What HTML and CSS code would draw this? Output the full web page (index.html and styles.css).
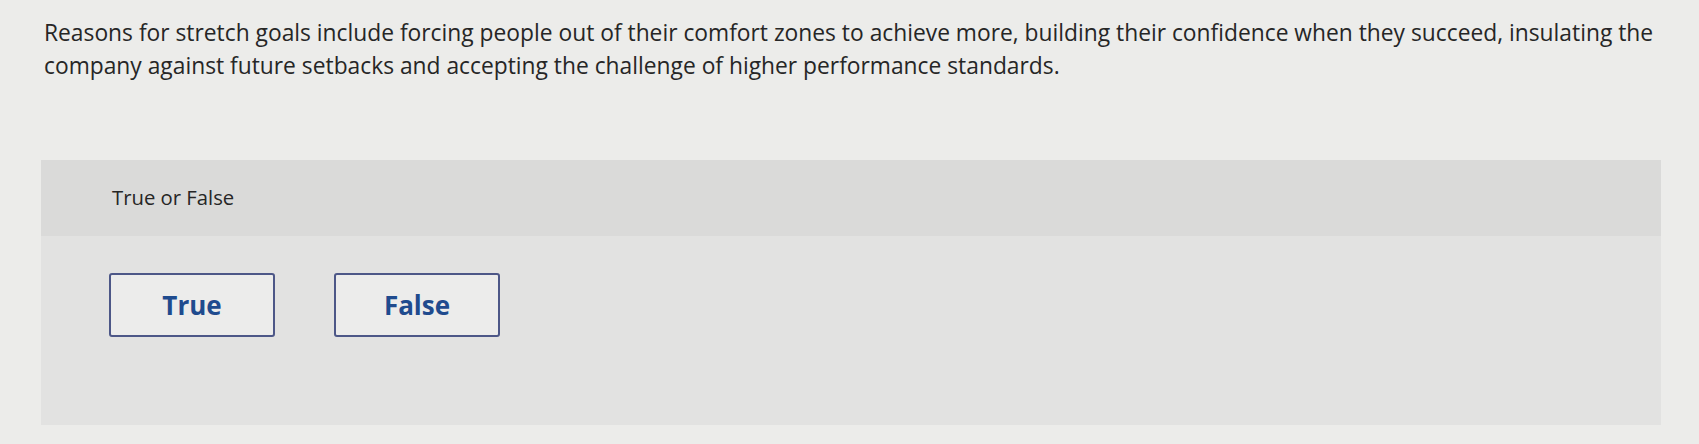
FILE: index.html
```html
<!DOCTYPE html>
<html lang="en">

<head>
  <title>True or False</title>
  <meta charset="utf-8">
  <link rel="stylesheet" href="styles.css">
</head>

<body>
  <div class="main">
    <p class="question">
      Reasons for stretch goals include forcing people out of their comfort zones to achieve more, building their confidence when they succeed, insulating the company against future setbacks and accepting the challenge of higher performance standards.
    </p>

    <div class="answer-box">
      <div class="answer-head">True or False</div>
      <div class="choices">
        <button type="button" class="choice">True</button>
        <button type="button" class="choice">False</button>
      </div>
    </div>
  </div>
</body>

</html>
```

FILE: styles.css
```css
body {
  margin: 0;
  background-color: #ececea;
  font-family: "Open Sans", Lato, Arial, sans-serif;
  color: #262626;
}

.main {
  padding: 16px 30px 0 41px;
}

.question {
  margin: 0 0 78px 3px;
  font-size: 22.8px;
  line-height: 33px;
  max-width: 1625px;
}

.answer-box {
  width: 1620px;
  background: #e2e2e1;
}

.answer-head {
  height: 76px;
  padding-left: 71px;
  line-height: 74px;
  font-size: 20.3px;
  background: #dadad9;
}

.choices {
  display: flex;
  gap: 59px;
  height: 152px;
  padding: 37px 0 0 68px;
}

.choice {
  width: 166px;
  height: 64px;
  background: #ececeb;
  border: 2px solid #4d5787;
  border-radius: 3px;
  font-family: inherit;
  font-size: 26px;
  font-weight: bold;
  color: #1f4b8e;
  cursor: pointer;
}
```
